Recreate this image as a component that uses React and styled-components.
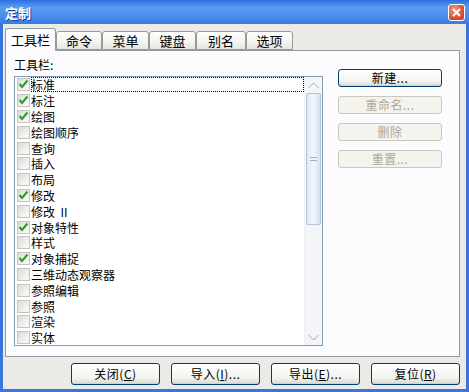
import React from "react";
import styled, { createGlobalStyle } from "styled-components";

const GlobalStyle = createGlobalStyle`
  html, body { margin: 0; padding: 0; background: #ffffff; }
  body { font-family: "Noto Sans CJK SC", "DejaVu Sans", sans-serif; font-size: 12px; }
`;

const Window = styled.div`
  width: 469px;
  height: 392px;
  box-sizing: border-box;
  display: flex;
  flex-direction: column;
  background: #3a74de;
  padding: 0 3px 3px 3px;
  overflow: hidden;
`;

const TitleBar = styled.div`
  height: 24px;
  margin: 0 -3px;
  padding: 0 4px 0 5px;
  display: flex;
  align-items: center;
  justify-content: space-between;
  background: linear-gradient(#2b6fe0 0%, #5a9cf0 30%, #4a8deb 70%, #3a7ae2 100%);
  color: #fff;
  font-weight: bold;
  font-size: 13px;
  text-shadow: 1px 1px 0 #1a3f9a;
`;

const CloseBox = styled.div`
  width: 17px;
  height: 17px;
  border-radius: 3px;
  border: 1px solid #fff;
  background: radial-gradient(circle at 35% 30%, #f09a80, #d0482c 70%);
  display: flex;
  align-items: center;
  justify-content: center;
  box-sizing: border-box;
`;

const Body = styled.div`
  flex: 1;
  background: #ebeae6;
  display: flex;
  flex-direction: column;
  padding: 4px 6px 0 2px;
`;

const TabRow = styled.div`
  display: flex;
  align-items: flex-end;
  height: 22px;
  position: relative;
  z-index: 1;
`;

const Tab = styled.div`
  box-sizing: border-box;
  height: ${(p) => (p.active ? 23 : 19)}px;
  width: ${(p) => p.w}px;
  margin-bottom: ${(p) => (p.active ? -1 : 0)}px;
  border: 1px solid #919b9c;
  border-bottom: ${(p) => (p.active ? "none" : "1px solid #919b9c")};
  border-radius: 3px 3px 0 0;
  background: ${(p) =>
    p.active ? "#fcfcfe" : "linear-gradient(#ffffff, #f3f3ef 60%, #e6e5de)"};
  display: flex;
  align-items: center;
  justify-content: center;
  font-size: 13px;
  color: #000;
  padding-bottom: ${(p) => (p.active ? 2 : 0)}px;
`;

const Panel = styled.div`
  box-sizing: border-box;
  height: 307px;
  border: 1px solid #919b9c;
  background: #fcfcfe;
  display: flex;
  padding: 6px 0 0 8px;
`;

const LeftCol = styled.div`
  display: flex;
  flex-direction: column;
  width: 309px;
`;

const Label = styled.div`
  height: 19px;
  line-height: 16px;
  font-size: 12px;
`;

const ListBox = styled.div`
  box-sizing: border-box;
  width: 309px;
  height: 270px;
  border: 1px solid #7f9db9;
  background: #fff;
  display: flex;
  overflow: hidden;
`;

const Items = styled.div`
  flex: 1;
  padding: 0 0 0 2px;
`;

const Item = styled.div`
  height: 15.8px;
  display: flex;
  align-items: center;
  gap: 1px;
  font-size: 12px;
  line-height: 15px;
  white-space: pre;
`;

const ItemText = styled.span`
  flex: 1;
  height: 15px;
  outline: ${(p) => (p.focus ? "1px dotted #000" : "none")};
  outline-offset: -1px;
`;

const Check = styled.div`
  width: 13px;
  height: 13px;
  box-sizing: border-box;
  border: 1px solid #c4c4c0;
  background: linear-gradient(135deg, #dcdcd6, #f6f6f4 80%);
  display: flex;
  align-items: center;
  justify-content: center;
  flex-shrink: 0;
`;

const Scroll = styled.div`
  width: 17px;
  display: flex;
  flex-direction: column;
  background: #f4f5f8;
  border-left: 1px solid #eef0f4;
`;

const ArrowBox = styled.div`
  height: 16px;
  display: flex;
  align-items: center;
  justify-content: center;
`;

const Thumb = styled.div`
  height: 132px;
  margin: 0 1px;
  box-sizing: border-box;
  border: 1px solid #b8c4da;
  border-radius: 2px;
  background: linear-gradient(90deg, #dfe6f3, #f4f7fc 50%, #d8e0ef);
  display: flex;
  flex-direction: column;
  align-items: center;
  justify-content: center;
  gap: 2px;
`;

const Grip = styled.div`
  width: 7px;
  height: 1px;
  background: #9fadc8;
`;

const Track = styled.div`
  flex: 1;
`;

const RightCol = styled.div`
  display: flex;
  flex-direction: column;
  gap: 9px;
  padding: 12px 0 0 15px;
`;

const Button = styled.button`
  box-sizing: border-box;
  width: ${(p) => p.w || 104}px;
  height: ${(p) => p.h || 18}px;
  padding: 0;
  border-radius: 3px;
  font-family: "Noto Sans CJK SC", "DejaVu Sans", sans-serif;
  font-size: 12px;
  line-height: 12px;
  letter-spacing: 0.5px;
  border: 1px solid ${(p) => (p.disabled ? "#c9c7ba" : "#003c74")};
  color: ${(p) => (p.disabled ? "#aca899" : "#000")};
  background: ${(p) =>
    p.disabled ? "#f4f3ee" : "linear-gradient(#ffffff, #f3f3ef 70%, #d8d8d0)"};
  box-shadow: ${(p) => (p.disabled ? "none" : "inset 0 -1px 0 #d6d0c5")};
`;

const Footer = styled.div`
  display: flex;
  justify-content: flex-end;
  gap: 11px;
  padding-top: 6px;
`;

const items = [
  ["标准", true],
  ["标注", true],
  ["绘图", true],
  ["绘图顺序", false],
  ["查询", false],
  ["插入", false],
  ["布局", false],
  ["修改", true],
  ["修改  II", false],
  ["对象特性", true],
  ["样式", false],
  ["对象捕捉", true],
  ["三维动态观察器", false],
  ["参照编辑", false],
  ["参照", false],
  ["渲染", false],
  ["实体", false],
];

const tabs = [
  ["工具栏", 51],
  ["命令", 46],
  ["菜单", 47],
  ["键盘", 47],
  ["别名", 50],
  ["选项", 47],
];

const CheckMark = () => (
  <svg width="11" height="11" viewBox="0 0 11 11">
    <path d="M1.5 5 L4 8 L9.5 1.5" fill="none" stroke="#21a121" strokeWidth="2" />
  </svg>
);

const App = () => (
  <>
    <GlobalStyle />
    <Window>
      <TitleBar>
        <span>定制</span>
        <CloseBox>
          <svg width="9" height="9" viewBox="0 0 9 9">
            <path d="M1 1 L8 8 M8 1 L1 8" stroke="#fff" strokeWidth="2" />
          </svg>
        </CloseBox>
      </TitleBar>
      <Body>
        <TabRow>
          {tabs.map(([t, w], i) => (
            <Tab key={t} w={w} active={i === 0}>
              {t}
            </Tab>
          ))}
        </TabRow>
        <Panel>
          <LeftCol>
            <Label>工具栏:</Label>
            <ListBox>
              <Items>
                {items.map(([name, on], i) => (
                  <Item key={name}>
                    <Check>{on && <CheckMark />}</Check>
                    <ItemText focus={i === 0}>{name}</ItemText>
                  </Item>
                ))}
              </Items>
              <Scroll>
                <ArrowBox>
                  <svg width="11" height="7" viewBox="0 0 11 7">
                    <path d="M0.5 6 L5.5 1 L10.5 6" fill="none" stroke="#a0a8b8" />
                  </svg>
                </ArrowBox>
                <Thumb>
                  <Grip />
                  <Grip />
                </Thumb>
                <Track />
                <ArrowBox>
                  <svg width="11" height="7" viewBox="0 0 11 7">
                    <path d="M0.5 1 L5.5 6 L10.5 1" fill="none" stroke="#a0a8b8" />
                  </svg>
                </ArrowBox>
              </Scroll>
            </ListBox>
          </LeftCol>
          <RightCol>
            <Button>新建...</Button>
            <Button disabled>重命名...</Button>
            <Button disabled>删除</Button>
            <Button disabled>重置...</Button>
          </RightCol>
        </Panel>
        <Footer>
          <Button w={89} h={22}>
            关闭(<u>C</u>)
          </Button>
          <Button w={89} h={22}>
            导入(<u>I</u>)...
          </Button>
          <Button w={89} h={22}>
            导出(<u>E</u>)...
          </Button>
          <Button w={89} h={22}>
            复位(<u>R</u>)
          </Button>
        </Footer>
      </Body>
    </Window>
  </>
);

export default App;
